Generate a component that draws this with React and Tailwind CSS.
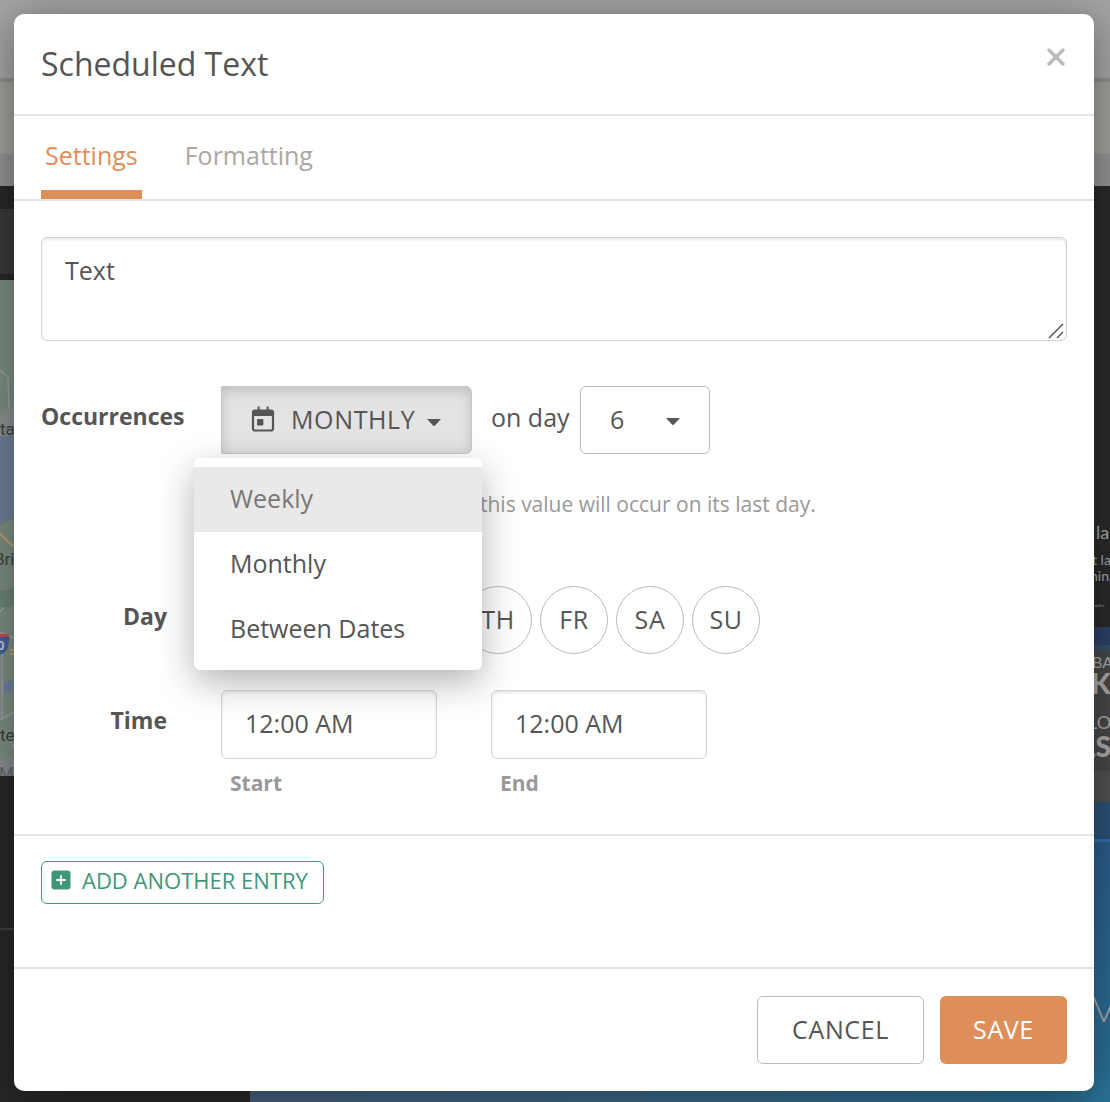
import { useState } from 'react'

const DAYS = ['MO', 'TU', 'WE', 'TH', 'FR', 'SA', 'SU']
const OCCURRENCES = ['Weekly', 'Monthly', 'Between Dates']

const Caret = ({ className }) => (
  <svg viewBox="0 0 14 7" className={className} aria-hidden="true">
    <path d="M0 0h14L8 6.5q-1 .9-2 0z" fill="currentColor" />
  </svg>
)

const CalendarIcon = () => (
  <svg viewBox="0 0 24 26" className="h-[26px] w-6" aria-hidden="true">
    <rect x="2" y="4.5" width="20" height="20" rx="2" fill="none" stroke="currentColor" strokeWidth="2.2" />
    <path d="M1.5 5h21v5h-21zM6.6 .5h2v4h-2zM15.6 .5h2v4h-2z" fill="currentColor" />
    <rect x="6" y="13" width="6.4" height="6.4" rx="1" fill="currentColor" />
  </svg>
)

const PlusSquare = () => (
  <svg viewBox="0 0 20 20" className="h-5 w-5" aria-hidden="true">
    <rect x=".5" y=".5" width="19" height="19" rx="3" fill="currentColor" />
    <path d="M10 5.2v9.6M5.2 10h9.6" stroke="#fff" strokeWidth="2" />
  </svg>
)

function MapStrip() {
  return (
    <svg viewBox="0 0 14 496" className="h-[496px] w-[14px]" aria-hidden="true">
      <rect width="14" height="496" fill="#7d8d82" />
      <path d="M0 156h14v82L0 245z" fill="#707e96" />
      <path d="M0 90l8 7 1 34M0 332l14-17M2 374v66M0 440l14-8M0 352l14 6M6 452l8 16" fill="none" stroke="#9ba0a3" strokeWidth="1.5" />
      <path d="M0 137q10-12 14-8v27H0z" fill="#8b9192" />
      <path d="M0 254l14 13M10 370h4M10 374h4" fill="none" stroke="#b29f75" strokeWidth="2.4" />
      <path d="M0 310q8 2 14-4v18q-6 6-14 2z" fill="#6a8474" />
      <path d="M0 355h8l1 2q1 14-9 18z" fill="#3f629a" />
      <path d="M0 354h9v3H0z" fill="#a85857" />
      <path d="M4 402l9-1-1 8-5 3-2 5-1-6z" fill="#6d80a4" />
      <path d="M0 480l14-4v20H0z" fill="#888d91" />
      <g fontFamily="Roboto, sans-serif" fontSize="17" fill="#3b4040">
        <text x="0" y="155">ta</text>
        <text x="-6" y="285">Bri</text>
        <text x="0" y="461">tev</text>
        <text x="-1" y="499" fill="#606568">Ma</text>
      </g>
      <text x="-3" y="370" fontFamily="Roboto, sans-serif" fontSize="13" fontWeight="700" fill="#c6cbd3">0</text>
    </svg>
  )
}

function PreviewStrip() {
  return (
    <svg viewBox="0 0 20 916" className="h-[916px] w-5" aria-hidden="true">
      <defs>
        <linearGradient id="sky" x1="0" y1="0" x2="0" y2="1">
          <stop offset="0" stopColor="#2b5b89" />
          <stop offset="1" stopColor="#2a7398" />
        </linearGradient>
      </defs>
      <rect width="20" height="916" fill="#292929" />
      <rect y="441" width="20" height="18" fill="#2b4166" />
      <rect y="459" width="20" height="6" fill="#374e64" />
      <rect y="465" width="20" height="120" fill="#474747" />
      <rect y="585" width="20" height="31" fill="#515151" />
      <rect y="616" width="20" height="38" fill="#2b5075" />
      <rect y="654" width="20" height="262" fill="url(#sky)" />
      <rect y="653" width="20" height="3" fill="#346dac" />
      <g fontFamily="Lato, sans-serif" fill="#a8a8a8">
        <text x="6" y="353" fontSize="18">la</text>
        <text x="2" y="379" fontSize="14">t la</text>
        <text x="0" y="395" fontSize="14">nin.</text>
        <text x="1" y="421" fontSize="4">d with t</text>
        <text x="2" y="482" fontSize="16">BA</text>
        <text x="1" y="508" fontSize="28" fontWeight="900">K</text>
        <text x="-2" y="543" fontSize="18">LO</text>
        <text x="-9" y="571" fontSize="28" fontWeight="900">LS</text>
        <text x="2" y="836" fontSize="36" fontWeight="300">V</text>
      </g>
    </svg>
  )
}

// dimmed editor page showing around the dialog
function Backdrop() {
  return (
    <div className="absolute inset-0 flex flex-col overflow-hidden bg-[#272727]" aria-hidden="true">
      <div className="h-[78px] shrink-0 bg-[#a5a4a2]" />
      <div className="h-1 shrink-0 bg-[#908f8d]" />
      <div className="h-[72px] shrink-0 bg-[#a09e9b]" />
      <div className="h-8 shrink-0 bg-[#939191]" />
      <div className="flex flex-1 justify-between">
        <div className="w-[14px]">
          <div className="h-[23px] bg-[#272727]" />
          <div className="h-[65px] bg-[#3a3a3a]" />
          <div className="h-[6px] bg-[#272727]" />
          <MapStrip />
          <div className="h-[154px] border-b-2 border-[#3e3e3e]" />
        </div>
        <div className="flex flex-1 items-end pl-[236px]">
          <div className="h-20 flex-1 bg-linear-to-r from-[#44607c] to-[#2a7094]" />
        </div>
        <div className="flex w-5 justify-end">
          <PreviewStrip />
        </div>
      </div>
    </div>
  )
}

function OccurrenceMenu({ onPick }) {
  return (
    <ul
      role="menu"
      className="absolute -left-[27px] top-[72px] z-10 w-72 rounded-md bg-white pb-2 pt-[9px] shadow-[0_12px_36px_rgba(0,0,0,0.3)]"
    >
      {OCCURRENCES.map((name) => (
        <li key={name} role="none">
          <button
            type="button"
            role="menuitem"
            onClick={() => onPick(name)}
            className={
              name === 'Weekly'
                ? 'block h-[65px] w-full bg-[#e9e9e9] px-9 pb-1 text-left text-[#777]'
                : 'block h-[65px] w-full px-9 pb-1 text-left'
            }
          >
            {name}
          </button>
        </li>
      ))}
    </ul>
  )
}

function TimeField({ id, label }) {
  return (
    <div className="flex w-[216px] flex-col">
      <input
        id={id}
        type="text"
        defaultValue="12:00 AM"
        className="h-[69px] w-full rounded-md border border-[#d3d3d3] bg-transparent px-[23px] pb-1 shadow-[inset_0_2px_3px_rgba(0,0,0,0.09)]"
      />
      <label htmlFor={id} className="mt-2 pl-[9px] text-[21px] font-bold leading-8 text-[#999]">
        {label}
      </label>
    </div>
  )
}

export default function App() {
  const [occurrence, setOccurrence] = useState('Monthly')
  const [open, setOpen] = useState(true)

  return (
    <div className="relative min-h-screen pb-[11px] pl-[14px] pr-4 pt-[14px] font-['Open_Sans',sans-serif] text-[25px] leading-9 text-[#555]">
      <Backdrop />
      <div
        role="dialog"
        aria-labelledby="dialog-title"
        className="relative rounded-[10px] bg-white shadow-[0_6px_40px_rgba(0,0,0,0.4)]"
      >
        <header className="flex h-[102px] items-center justify-between border-b-2 border-[#e5e5e5] px-[27px]">
          <h1 id="dialog-title" className="text-[32px] leading-10">Scheduled Text</h1>
          <button type="button" aria-label="Close" className="mb-[14px] p-[2px] text-[#bbb]">
            <svg viewBox="0 0 18 18" className="h-[18px] w-[18px]" aria-hidden="true">
              <path d="M2 2l14 14M16 2L2 16" stroke="currentColor" strokeWidth="3.4" strokeLinecap="round" />
            </svg>
          </button>
        </header>

        <nav className="flex h-[85px] gap-[39px] border-b-2 border-[#e5e5e5] px-[27px]">
          <a href="#settings" className="border-b-[9px] border-[#de8e59] px-1 pt-[21px] text-[#de8e59]">Settings</a>
          <a href="#formatting" className="px-1 pt-[21px] text-[#aea6a2]">Formatting</a>
        </nav>

        <section className="border-b-2 border-[#e5e5e5] px-[27px] pb-[35px] pt-9">
          <div className="relative">
            <textarea
              aria-label="Text"
              defaultValue="Text"
              className="block h-[104px] w-full resize-none rounded-md border border-[#d3d3d3] px-[23px] py-[14px] shadow-[inset_0_2px_3px_rgba(0,0,0,0.09)]"
            />
            <svg viewBox="0 0 16 16" className="pointer-events-none absolute bottom-[2px] right-[3px] h-4 w-4" aria-hidden="true">
              <path d="M1 15L15 1M9 15l6-6" stroke="#555" strokeWidth="1.5" />
            </svg>
          </div>

          <div className="mt-[45px] flex h-[68px]">
            <span id="occ-label" className="w-[180px] pt-3 text-[23px] font-bold">Occurrences</span>
            <div className="relative">
              <button
                type="button"
                aria-haspopup="menu"
                aria-expanded={open}
                aria-labelledby="occ-label"
                onClick={() => setOpen(!open)}
                className="flex h-full w-[251px] items-center rounded-r-md border border-[#c6c6c6] bg-[#e3e3e3] pb-[2px] pl-[29px] uppercase tracking-wide shadow-[inset_0_4px_12px_rgba(0,0,0,0.16)]"
              >
                <CalendarIcon />
                <span className="ml-4 mr-3">{occurrence}</span>
                <Caret className="mt-[6px] h-[7px] w-[14px]" />
              </button>
              {open && (
                <OccurrenceMenu
                  onPick={(name) => {
                    setOccurrence(name)
                    setOpen(false)
                  }}
                />
              )}
            </div>
            <label htmlFor="day-of-month" className="ml-[19px] w-[89px] pt-[13px]">on day</label>
            <div className="relative w-[130px]">
              <select
                id="day-of-month"
                defaultValue={6}
                className="h-full w-full appearance-none rounded-md border border-[#bbb] bg-white pb-[2px] pl-[29px]"
              >
                {Array.from({ length: 31 }, (_, i) => (
                  <option key={i} value={i + 1}>{i + 1}</option>
                ))}
              </select>
              <Caret className="pointer-events-none absolute right-[30px] top-8 h-[7px] w-[14px]" />
            </div>
          </div>

          <p className="mt-8 pl-[439px] text-[21px] text-[#999]">this value will occur on its last day.</p>

          <div className="mt-16 flex h-[68px]">
            <span className="w-[126px] pt-3 text-right text-[23px] font-bold">Day</span>
            <div className="ml-[69px] flex gap-2">
              {DAYS.map((day) => (
                <button
                  key={day}
                  type="button"
                  className="h-[68px] w-[68px] rounded-full border border-[#bbb] pb-[2px] tracking-wide"
                >
                  {day}
                </button>
              ))}
            </div>
          </div>

          <div className="mt-9 flex">
            <span className="w-[126px] pt-3 text-right text-[23px] font-bold">Time</span>
            <div className="ml-[54px] flex gap-[54px]">
              <TimeField id="start" label="Start" />
              <TimeField id="end" label="End" />
            </div>
          </div>
        </section>

        <section className="border-b-2 border-[#e5e5e5] px-[27px] pb-[63px] pt-[25px]">
          <button
            type="button"
            className="flex h-[43px] min-w-[283px] items-center gap-[11px] rounded-md border border-[#40967a] px-[9px] pb-[5px] text-[22px] text-[#40967a]"
          >
            <PlusSquare />
            ADD ANOTHER ENTRY
          </button>
        </section>

        <footer className="flex justify-end gap-4 p-[27px]">
          <button type="button" className="h-[68px] w-[167px] rounded-md border border-[#bbb] pb-[2px] tracking-wide">CANCEL</button>
          <button type="button" className="h-[68px] w-[127px] rounded-md bg-[#de8e59] pb-[2px] tracking-wide text-white">SAVE</button>
        </footer>
      </div>
    </div>
  )
}
